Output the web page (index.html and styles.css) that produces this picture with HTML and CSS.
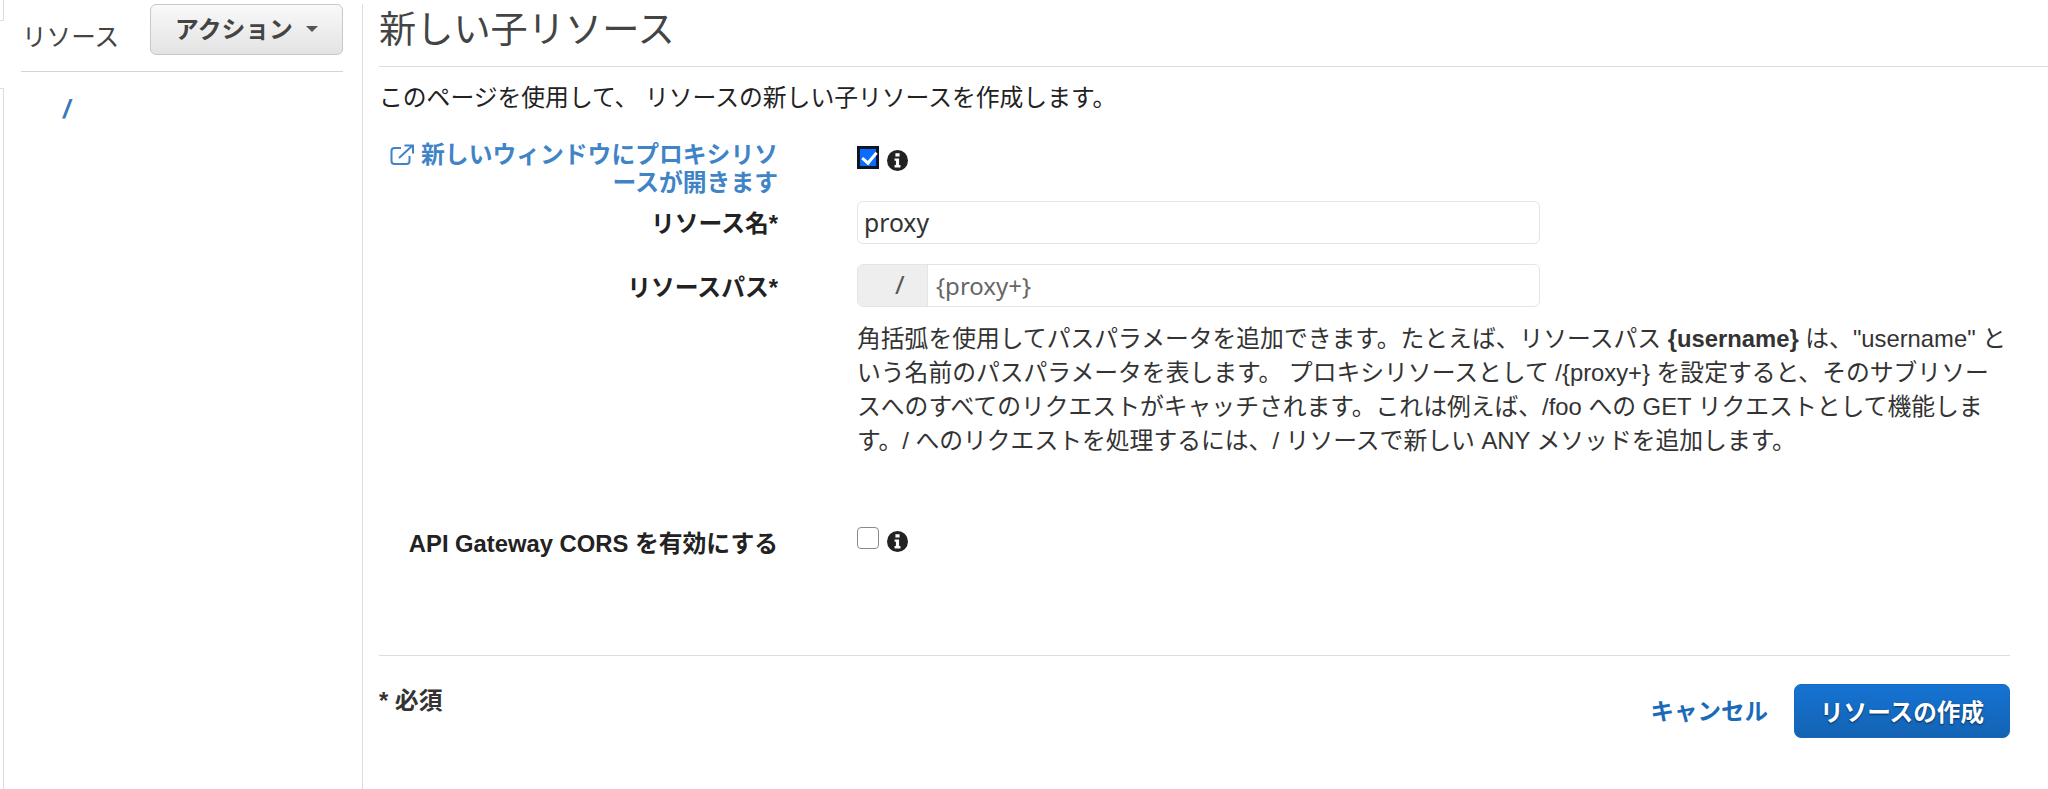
FILE: index.html
```html
<!DOCTYPE html>
<html lang="ja">
<head>
<meta charset="utf-8">
<title>新しい子リソース</title>
<link rel="stylesheet" href="styles.css">
</head>
<body>
<div class="app">
  <div class="rail"><div class="rail-top"></div><div class="rail-bottom"></div></div>
  <aside class="sidebar">
    <div class="side-head">
      <span class="side-title">リソース</span>
      <button class="action-btn" type="button">アクション<span class="caret"></span></button>
    </div>
    <div class="tree"><a class="tree-root">/</a></div>
  </aside>
  <main class="main">
    <h1 class="title">新しい子リソース</h1>
    <p class="intro">このページを使用して、 リソースの新しい子リソースを作成します。</p>
    <div class="row row-proxy">
      <div class="label link-label">
        <svg class="ext" viewBox="0 0 24 21" width="24" height="21" fill="none" stroke="#3f84c7" stroke-width="2"><path d="M11 4H4.5A3 3 0 0 0 1.5 7v10a3 3 0 0 0 3 3h12a3 3 0 0 0 3-3v-5"/><path d="M9 14 22 2M14.5 1.5H23V9.5"/></svg>
        新しいウィンドウにプロキシリソースが開きます
      </div>
      <div class="field check-field">
        <input class="check" type="checkbox" checked>
        <svg class="info" viewBox="0 0 20 20" width="21" height="21"><path fill="#222" fill-rule="evenodd" d="M10 0a10 10 0 1 1 0 20a10 10 0 0 1 0-20ZM8 3.2v3h4v-3ZM7.2 8.2v2h1.3v4H7.2v2.4h5.6v-2.4h-1.3V8.2Z"/></svg>
      </div>
    </div>
    <div class="row row-name">
      <label class="label">リソース名*</label>
      <div class="field"><input class="text-input" type="text" value="proxy"></div>
    </div>
    <div class="row row-path">
      <label class="label">リソースパス*</label>
      <div class="field">
        <div class="path-group"><span class="addon">/</span><input class="path-input" type="text" value="{proxy+}"></div>
        <p class="help">角括弧を使用してパスパラメータを追加できます。たとえば、リソースパス <b>{username}</b> は、"username" と<br>いう名前のパスパラメータを表します。 プロキシリソースとして /{proxy+} を設定すると、そのサブリソー<br>スへのすべてのリクエストがキャッチされます。これは例えば、/foo への GET リクエストとして機能しま<br>す。/ へのリクエストを処理するには、/ リソースで新しい ANY メソッドを追加します。</p>
      </div>
    </div>
    <div class="row row-cors">
      <label class="label">API Gateway CORS を有効にする</label>
      <div class="field check-field">
        <input class="check" type="checkbox">
        <svg class="info" viewBox="0 0 20 20" width="21" height="21"><path fill="#222" fill-rule="evenodd" d="M10 0a10 10 0 1 1 0 20a10 10 0 0 1 0-20ZM8 3.2v3h4v-3ZM7.2 8.2v2h1.3v4H7.2v2.4h5.6v-2.4h-1.3V8.2Z"/></svg>
      </div>
    </div>
    <div class="footer">
      <span class="required">* 必須</span>
      <div class="actions">
        <a class="cancel">キャンセル</a>
        <button class="primary" type="button">リソースの作成</button>
      </div>
    </div>
  </main>
</div>
</body>
</html>
```
FILE: styles.css
```css
* { box-sizing: border-box; }
html, body { margin: 0; padding: 0; background: #fff; }
body {
  font-family: "Liberation Sans", "Noto Sans CJK JP", sans-serif;
  color: #222;
  font-size: 23.8px;
  overflow: hidden;
}
.app { display: flex; height: 789px; }

.rail { width: 4px; flex: none; }
.rail-top { height: 21px; border-right: 1px solid #ddd; border-bottom: 1px solid #ddd; }
.rail-bottom { height: 701px; margin-top: 67px; border-right: 1px solid #ddd; border-top: 1px solid #ddd; }

.sidebar { width: 339px; flex: none; margin-right: 19px; padding-top: 4px; }
.side-head { display: flex; justify-content: space-between; align-items: flex-start; height: 68px; margin-left: 17px; border-bottom: 1px solid #d5d5d5; }
.side-title { font-size: 24.6px; color: #444; margin: 19px 0 0 1px; line-height: 30px; }
.action-btn {
  width: 193px; height: 51px; padding: 0 0 5px; border: 1px solid #c8c8c8; border-radius: 6px;
  background: linear-gradient(#f9f9f9, #e3e3e3);
  font: bold 23.8px "Liberation Sans", "Noto Sans CJK JP", sans-serif; color: #444;
  display: flex; align-items: center; justify-content: center; gap: 13px;
}
.caret { width: 0; height: 0; border: 6px solid transparent; border-top-color: #555; border-bottom: 0; margin-top: 3px; }
.tree { padding: 22px 0 0 59px; }
.tree-root { color: #3a79b8; font-style: italic; font-weight: bold; font-size: 26px; line-height: 30px; }

.main { flex: 1; min-width: 0; border-left: 1px solid #ddd; margin-top: 4px; padding: 0 38px 0 16px; }
.title { margin: 0 -38px 0 0; height: 63px; border-bottom: 1px solid #ddd; font-size: 37.2px; font-weight: 400; color: #444; line-height: 52px; }
.intro { margin: 15px 0 0; line-height: 32px; color: #222; }

.row { display: grid; grid-template-columns: 399px 1fr; column-gap: 79px; }
.label { text-align: right; font-weight: bold; line-height: 27px; color: #222; }
.link-label { color: #3f84c7; padding-left: 4px; line-height: 28px; }
.ext { vertical-align: -2px; margin-right: 0; }
.row-proxy { margin-top: 27px; height: 60px; }
.row-proxy .check-field { padding-top: 5px; }
.row-name { height: 63px; }
.row-name .label { padding-top: 9px; }
.row-path .label { padding-top: 10px; }
.row-cors { margin-top: 66px; }
.row-cors .label { padding-top: 6px; }

.check-field { display: flex; align-items: flex-start; gap: 8px; padding-top: 3px; }
.check {
  appearance: none; -webkit-appearance: none; margin: 0; width: 22px; height: 22px; flex: none;
  border: 1px solid #8a8a8a; border-radius: 4px; background: #fff; position: relative;
}
.check:checked { background: #0a6cff; border: 3px solid #0b1526; border-radius: 0; height: 23px; }
.check:checked::after {
  content: ""; position: absolute; left: 5px; top: 0; width: 6px; height: 12px;
  border: solid #fff; border-width: 0 3px 3px 0; transform: rotate(40deg);
}
.info { flex: none; margin-top: 4px; }

.text-input, .path-group { width: 683px; height: 43px; border: 1px solid #e4e4e4; border-radius: 6px; background: #fff; }
.text-input { display: block; padding: 0 6px; font: 24.7px "Noto Sans", sans-serif; color: #333; outline: none; }
.path-group { display: flex; overflow: hidden; }
.addon { width: 70px; flex: none; background: #eee; border-right: 1px solid #e4e4e4; color: #555; font: 26px/38px "Noto Sans", sans-serif; padding-left: 37px; }
.path-input { flex: 1; min-width: 0; border: 0; outline: none; padding: 0 8px; font: 24px "Noto Sans", sans-serif; color: #666; background: transparent; }
.help { margin: 15px 0 0; width: 1170px; line-height: 34px; color: #333; }

.footer { margin-top: 98px; border-top: 1px solid #ddd; display: flex; justify-content: space-between; align-items: flex-start; padding-top: 28px; }
.required { font-weight: bold; line-height: 34px; color: #333; }
.actions { display: flex; align-items: center; gap: 26px; }
.cancel { color: #1b6ab9; font-weight: bold; font-size: 23.5px; padding-bottom: 3px; }
.primary {
  width: 216px; height: 54px; border: 1px solid #1668bd; border-radius: 7px; padding: 0;
  background: linear-gradient(#1673d3, #1363b3); color: #fff;
  font: bold 23.6px "Liberation Sans", "Noto Sans CJK JP", sans-serif;
  text-shadow: 0 1px 2px rgba(0,0,0,.6);
}
```
